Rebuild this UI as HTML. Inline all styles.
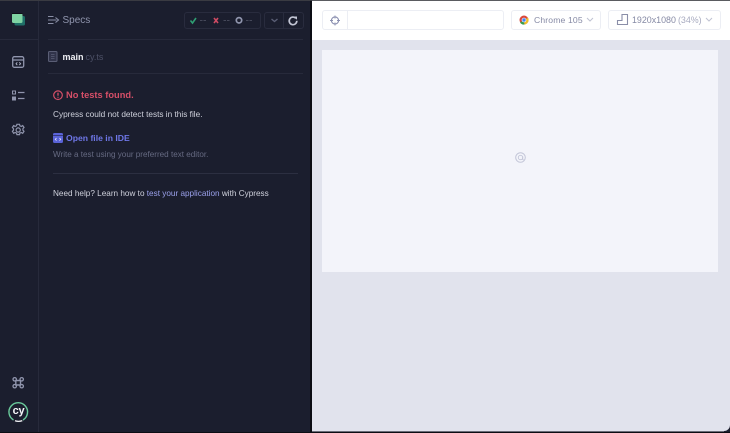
<!DOCTYPE html>
<html>
<head>
<meta charset="utf-8">
<style>
html,body{margin:0;padding:0;width:730px;height:433px;overflow:hidden;background:#1b1e2e;font-family:"Liberation Sans",sans-serif}
.a{position:absolute;white-space:nowrap}
svg{position:absolute;overflow:visible}
</style>
</head>
<body>
<div class="a" style="left:0;top:0;width:730px;height:433px;background:#1b1e2e;overflow:hidden">
  <!-- sidebar -->
  <div class="a" style="left:38px;top:0;width:1px;height:433px;background:#272a3b"></div>
  <div class="a" style="left:0;top:39px;width:38px;height:1px;background:#272a3b"></div>

  <svg style="left:0;top:0" width="38" height="40"><rect x="14.5" y="16" width="10.5" height="9.5" rx="1.5" fill="#1f6f68"/><rect x="12" y="13.5" width="10.5" height="9.5" rx="1.2" fill="#7fd3a3"/><rect x="12" y="13" width="10.5" height="1" fill="#0f1018"/></svg>

  <svg style="left:0;top:50px" width="38" height="100" fill="none" stroke="#9095ad">
    <rect x="12.700" y="6.700" width="11" height="10.600" rx="1.600" stroke-width="1.300"/>
    <path d="M13 10h10.500" stroke-width="1.300"/>
    <path d="M17.300 12.300l-1.300 1.400 1.300 1.400M19.300 12.300l1.300 1.400-1.300 1.400" stroke-width=".9" stroke="#b4b8cc"/>
    <rect x="12.500" y="41" width="3" height="3" stroke-width="1"/>
    <rect x="12.500" y="47" width="3" height="3" fill="#9095ad" stroke-width="1"/>
    <path d="M18 42.500h6.500M18 48.500h6.500" stroke-width="1.300"/>
    <circle cx="18.200" cy="80" r="2.100" stroke-width="1.200"/>
    <path d="M16.900 74.300h2.600l.4 1.500 1.400.6 1.400-.8 1.300 1.900-1.100 1.200v1.400l1.100 1.200-1.300 2-1.400-.8-1.400.6-.4 1.500h-2.600l-.4-1.500-1.400-.6-1.400.8-1.300-2 1.100-1.200v-1.400l-1.100-1.200 1.300-1.900 1.400.8 1.400-.6z" stroke-width="1.200"/>
  </svg>

  <svg style="left:0;top:370px" width="38" height="60" fill="none">
    <path d="M15.800 10.500h5M15.800 15h5M15.800 10.500v5M20.500 10.500v5" stroke="#9095ad" stroke-width="1.400"/>
    <circle cx="14.700" cy="9.300" r="1.700" stroke="#9095ad" stroke-width="1.300"/>
    <circle cx="21.700" cy="9.300" r="1.700" stroke="#9095ad" stroke-width="1.300"/>
    <circle cx="14.700" cy="16.200" r="1.700" stroke="#9095ad" stroke-width="1.300"/>
    <circle cx="21.700" cy="16.200" r="1.700" stroke="#9095ad" stroke-width="1.300"/>
    <path d="M13.500 50A9.300 9.300 0 1 1 23 50" stroke="#69c99b" stroke-width="1.400"/>
    <path d="M15 50.800c2.500.8 5 .7 7.300-.2" stroke="#f0f1f5" stroke-width="1.300"/>
  </svg>
  <div class="a" style="left:10.500px;top:404px;width:16px;text-align:center;font-size:11px;font-weight:bold;line-height:14px;color:#f4f5f8;letter-spacing:-.3px">cy</div>

  <!-- panel header -->
  <svg style="left:48px;top:14px" width="12" height="12" fill="none" stroke="#8a8fa6" stroke-width="1">
    <path d="M0 2.500h5.500M0 6h8.500M0 9.500h5.500"/>
    <path d="M7.500 3.500l3 2.500-3 2.500" stroke-width="1.100"/>
  </svg>
  <div class="a" style="left:62.500px;top:14px;font-size:10px;line-height:13px;color:#9095ad">Specs</div>

  <div class="a" style="left:184px;top:12px;width:75px;height:15px;border:1px solid #292c3e;border-radius:3px"></div>
  <svg style="left:184px;top:12px" width="80" height="17" fill="none">
    <path d="M6.500 8.500l2 2.500 3.500-5" stroke="#2f9e73" stroke-width="1.600"/>
    <path d="M16 8.500h2.500M19.500 8.500h2.500" stroke="#454859" stroke-width="1"/>
    <path d="M30 6l4 5M34 6l-4 5" stroke="#cf4b63" stroke-width="1.600"/>
    <path d="M39.500 8.500h2.500M43 8.500h2.500" stroke="#454859" stroke-width="1"/>
    <circle cx="55" cy="8.300" r="2.700" stroke="#9095ad" stroke-width="1.700"/>
    <path d="M62 8.500h2.500M65.500 8.500h2.500" stroke="#454859" stroke-width="1"/>
  </svg>
  <div class="a" style="left:264px;top:12px;width:38px;height:15px;border:1px solid #292c3e;border-radius:3px"></div>
  <div class="a" style="left:283px;top:13px;width:1px;height:15px;background:#292c3e"></div>
  <svg style="left:264px;top:12px" width="40" height="17" fill="none">
    <path d="M7.500 7l3 2.500 3-2.500" stroke="#5a5e75" stroke-width="1.400"/>
    <path d="M31.800 6.300a3.800 3.800 0 1 0 1 2.500" stroke="#c2c5d4" stroke-width="1.700"/>
    <path d="M29.500 4.500h3.500v3.200z" fill="#c2c5d4"/>
  </svg>

  <div class="a" style="left:48px;top:39px;width:255px;height:1px;background:#272a3b"></div>
  <div class="a" style="left:48px;top:73px;width:255px;height:1px;background:#272a3b"></div>

  <!-- file -->
  <svg style="left:48px;top:51px" width="10" height="11" fill="none">
    <rect x=".5" y=".5" width="8.500" height="10" rx="1" fill="#31344a" stroke="#5a5e75"/>
    <path d="M3 3.500h3.500M3 5.500h3.500M3 7.500h3.500" stroke="#5a5e75" stroke-width=".8"/>
  </svg>
  <div class="a" style="left:62.500px;top:51px;font-size:9px;line-height:12px;color:#f0f1f5;font-weight:bold">main<span style="font-weight:normal;color:#4c5066;margin-left:2px">cy.ts</span></div>

  <!-- message -->
  <svg style="left:53px;top:90px" width="11" height="11" fill="none">
    <circle cx="5" cy="5.200" r="4.300" stroke="#d64f68" stroke-width="1.200"/>
    <path d="M5 2.700v3" stroke="#d64f68" stroke-width="1.300"/>
    <path d="M5 6.800v1" stroke="#d64f68" stroke-width="1.200"/>
  </svg>
  <div class="a" style="left:66px;top:89px;font-size:9.300px;line-height:13px;font-weight:bold;color:#d64f68">No tests found.</div>
  <div class="a" style="left:53px;top:109px;font-size:8.250px;line-height:12px;color:#cfd1dc">Cypress could not detect tests in this file.</div>

  <svg style="left:53px;top:133px" width="11" height="11" fill="none">
    <rect x="0" y="0" width="10" height="10" rx="1.500" fill="#5a63d8"/>
    <path d="M0 2.600h10" stroke="#262a55" stroke-width=".7"/>
    <path d="M3.500 5l-1.200 1.300 1.200 1.300M6.500 5l1.200 1.300-1.200 1.300" stroke="#e4e6f8" stroke-width=".8"/>
  </svg>
  <div class="a" style="left:66px;top:132px;font-size:8.650px;line-height:13px;font-weight:bold;color:#6f77e8">Open file in IDE</div>
  <div class="a" style="left:53px;top:149px;font-size:8.120px;line-height:12px;color:#666a82">Write a test using your preferred text editor.</div>
  <div class="a" style="left:53px;top:173px;width:245px;height:1px;background:#2c2f41"></div>
  <div class="a" style="left:53px;top:188px;font-size:8.200px;line-height:12px;color:#cfd1dc">Need help? Learn how to <span style="color:#9aa0ea">test your application</span> with Cypress</div>

  <!-- right side -->
  <div class="a" style="left:310px;top:0;width:2px;height:433px;background:#0c0d14"></div>
  <div class="a" style="left:312px;top:0;width:418px;height:431px;background:#e1e3ed;border-bottom-right-radius:6px;overflow:hidden">
    <div class="a" style="left:0;top:0;width:418px;height:40px;background:#fff"></div>
    <div class="a" style="left:10px;top:10px;width:180px;height:18px;border:1px solid #eceef4;border-radius:3px;background:#fff"></div>
    <div class="a" style="left:35px;top:11px;width:1px;height:18px;background:#eceef4"></div>
    <svg style="left:10px;top:10px" width="25" height="20" fill="none" stroke="#8a8fb0">
      <circle cx="13" cy="10.500" r="3.600" stroke-width="1.100"/>
      <path d="M13 5.500v3M13 12.500v3M8 10.500h3M15 10.500h3" stroke-width=".9"/>
    </svg>

    <div class="a" style="left:199px;top:10px;width:88px;height:18px;border:1px solid #eceef4;border-radius:3px;background:#fff"></div>
    <svg style="left:207px;top:15px" width="10" height="10">
      <circle cx="5" cy="5" r="4.500" fill="#d9483b"/>
      <path d="M5 5L1 7.500A4.500 4.500 0 0 0 5.500 9.500z" fill="#3a9b4f"/>
      <path d="M5 5L5.500 9.500A4.500 4.500 0 0 0 9 2.800z" fill="#f0bd2d"/>
      <circle cx="5" cy="5" r="2.300" fill="#fff"/>
      <circle cx="5" cy="5" r="1.700" fill="#4285f4"/>
    </svg>
    <div class="a" style="left:222px;top:14px;font-size:8.600px;line-height:12px;letter-spacing:.15px;color:#868aa5">Chrome 105</div>
    <svg style="left:274px;top:16px" width="10" height="8" fill="none"><path d="M1 2l3 3 3-3" stroke="#bfc2d2"/></svg>

    <div class="a" style="left:296px;top:10px;width:111px;height:18px;border:1px solid #eceef4;border-radius:3px;background:#fff"></div>
    <svg style="left:305px;top:14px" width="12" height="12" fill="none" stroke="#8a8ea8" stroke-width="1.100">
      <path d="M.500 6.500h4.500V.500h5.500v10H.500z"/>
    </svg>
    <div class="a" style="left:320px;top:14px;font-size:8.900px;line-height:12px;color:#868aa5">1920x1080<span style="color:#a8abc0;margin-left:2px">(34%)</span></div>
    <svg style="left:393px;top:16px" width="10" height="8" fill="none"><path d="M1 2l3 3 3-3" stroke="#bfc2d2"/></svg>

    <div class="a" style="left:10px;top:50px;width:396px;height:222px;background:#f3f4fa"></div>
    <svg style="left:203px;top:152px" width="11" height="11" fill="none" stroke="#c3c6d8">
      <circle cx="5.500" cy="5.500" r="4.800"/>
      <circle cx="5.500" cy="5.500" r="2.200" stroke-width=".9"/>
      <path d="M7.700 4.500v3l1 .5" stroke-width=".9"/>
    </svg>
  </div>
  <div class="a" style="left:0;top:0;width:730px;height:1px;background:#3a3b42"></div>
  <div class="a" style="left:312px;top:0;width:418px;height:1px;background:#5a5b60"></div>
  <div class="a" style="left:0;top:432px;width:730px;height:1px;background:#0c0d14"></div>
  <div class="a" style="left:312px;top:431px;width:412px;height:1px;background:#6a6c78"></div>
</div>
</body>
</html>
